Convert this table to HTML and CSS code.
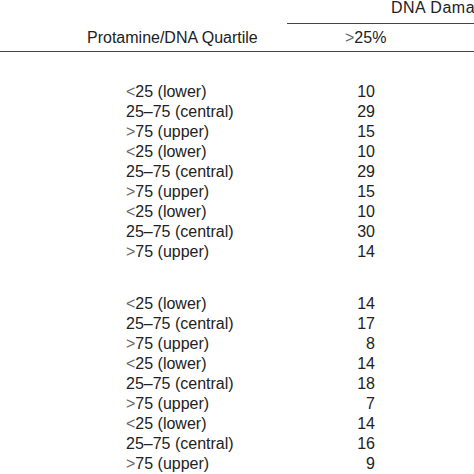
FILE: index.html
```html
<!DOCTYPE html>
<html>
<head>
<meta charset="utf-8">
<link rel="stylesheet" href="styles.css">
</head>
<body>
<div class="page">
  <div class="span-head">DNA Damage</div>
  <div class="rule rule-span"></div>
  <div class="head-row">
    <div class="hlab">Protamine/DNA Quartile</div>
    <div class="hnum"><span class="op">&gt;</span>25%</div>
  </div>
  <div class="rule rule-full"></div>

  <div class="group g1">
    <div class="row"><div class="lab"><span class="op">&lt;</span>25 (lower)</div><div class="num">10</div></div>
    <div class="row"><div class="lab">25–75 (central)</div><div class="num">29</div></div>
    <div class="row"><div class="lab"><span class="op">&gt;</span>75 (upper)</div><div class="num">15</div></div>
    <div class="row"><div class="lab"><span class="op">&lt;</span>25 (lower)</div><div class="num">10</div></div>
    <div class="row"><div class="lab">25–75 (central)</div><div class="num">29</div></div>
    <div class="row"><div class="lab"><span class="op">&gt;</span>75 (upper)</div><div class="num">15</div></div>
    <div class="row"><div class="lab"><span class="op">&lt;</span>25 (lower)</div><div class="num">10</div></div>
    <div class="row"><div class="lab">25–75 (central)</div><div class="num">30</div></div>
    <div class="row"><div class="lab"><span class="op">&gt;</span>75 (upper)</div><div class="num">14</div></div>
  </div>

  <div class="group g2">
    <div class="row"><div class="lab"><span class="op">&lt;</span>25 (lower)</div><div class="num">14</div></div>
    <div class="row"><div class="lab">25–75 (central)</div><div class="num">17</div></div>
    <div class="row"><div class="lab"><span class="op">&gt;</span>75 (upper)</div><div class="num">8</div></div>
    <div class="row"><div class="lab"><span class="op">&lt;</span>25 (lower)</div><div class="num">14</div></div>
    <div class="row"><div class="lab">25–75 (central)</div><div class="num">18</div></div>
    <div class="row"><div class="lab"><span class="op">&gt;</span>75 (upper)</div><div class="num">7</div></div>
    <div class="row"><div class="lab"><span class="op">&lt;</span>25 (lower)</div><div class="num">14</div></div>
    <div class="row"><div class="lab">25–75 (central)</div><div class="num">16</div></div>
    <div class="row"><div class="lab"><span class="op">&gt;</span>75 (upper)</div><div class="num">9</div></div>
  </div>
</div>
</body>
</html>
```
FILE: styles.css
```css
html, body {
  margin: 0;
  padding: 0;
  background: #ffffff;
}

.page {
  width: 474px;
  height: 474px;
  overflow: hidden;
  font-family: "Liberation Sans", Arial, Helvetica, sans-serif;
  font-size: 16px;
  color: #222222;
  background: #ffffff;
}

.span-head {
  padding-left: 391px;
  line-height: 15px;
  height: 15px;
  white-space: nowrap;
  letter-spacing: 0.5px;
}

.rule {
  height: 0;
  border-top: 1.6px solid #444444;
}

.rule-span {
  margin-top: 7.5px;
  margin-left: 287px;
}

.head-row {
  display: flex;
  margin-top: 4px;
  line-height: 20px;
  height: 20px;
  white-space: nowrap;
}

.hlab {
  width: 345px;
  flex: none;
  padding-left: 87px;
  box-sizing: border-box;
}

.rule-full {
  margin-top: 3px;
}

.g1 {
  margin-top: 30px;
}

.g2 {
  margin-top: 32px;
}

.row {
  display: flex;
  line-height: 20px;
  height: 20px;
  white-space: nowrap;
}

.lab {
  margin-left: 126px;
  width: 189px;
  flex: none;
}

.num {
  width: 60px;
  flex: none;
  text-align: right;
}

.op {
  color: #666666;
}
```
